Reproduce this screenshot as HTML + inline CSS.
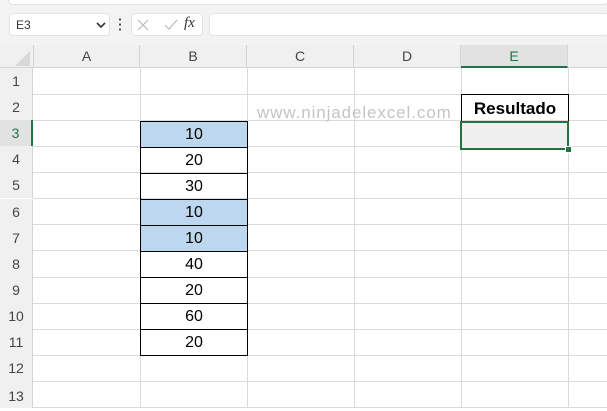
<html><head><style>
body{margin:0;width:607px;height:408px;overflow:hidden;background:#fff;font-family:"Liberation Sans",sans-serif;position:relative}
.top{position:absolute;left:0;top:0;width:607px;height:45px;background:#f3f3f3}
.strip{position:absolute;left:8px;top:0;width:599px;height:4px;background:#fff;border-radius:0 0 6px 6px;border:1px solid #e0e0e0;border-top:none}
.box{position:absolute;top:13px;height:23px;background:#fff;border-radius:4px;border:1px solid #e3e3e3;box-sizing:border-box}
.hdr{position:absolute;top:45px;height:23px;background:#f0f0f0;border-bottom:1px solid #d4d4d4;box-sizing:border-box}
.ch{position:absolute;top:45px;height:23px;line-height:23px;text-align:center;font-size:14px;color:#444;border-right:1px solid #d4d4d4;box-sizing:border-box}
.rh{position:absolute;left:0;width:33px;text-align:center;font-size:14px;color:#444;background:#f0f0f0;border-right:1px solid #d4d4d4;box-sizing:border-box}
.vl{position:absolute;top:68px;width:1px;height:340px;background:#dadada}
.hl{position:absolute;left:33px;width:574px;height:1px;background:#dadada}
.c{position:absolute;left:140px;width:108px;height:27px;border:1px solid #000;box-sizing:border-box;text-align:center;font-size:16px;line-height:25px;color:#000}
</style></head><body>
<div class="top"></div><div class="strip"></div>
<div class="box" style="left:9px;width:101px"><span style="position:absolute;left:6px;top:4px;font-size:12px;color:#333">E3</span><svg style="position:absolute;left:86px;top:8px" width="10" height="7"><path d="M1 1L5 5L9 1" stroke="#333" stroke-width="1.6" fill="none"/></svg></div>
<div style="position:absolute;left:119px;top:17px;width:2px;height:14px;background:radial-gradient(circle,#444 1px,transparent 1.2px) 0 0/2px 5px"></div>
<div class="box" style="left:131px;width:72px"><svg style="position:absolute;left:5px;top:5px" width="50" height="12"><path d="M1 1L11 11M11 1L1 11" stroke="#bbb" stroke-width="1.2"/><path d="M28 6L32 10L40 1" stroke="#bbb" stroke-width="1.2" fill="none"/></svg><span style="position:absolute;left:52px;top:1px;font-family:'Liberation Serif',serif;font-style:italic;font-size:15px;color:#333">fx</span></div>
<div class="box" style="left:209px;width:400px"></div>
<div class="hdr" style="left:0;width:607px"></div>
<svg style="position:absolute;left:14px;top:51px" width="18" height="16"><path d="M16 0L16 15L1 15Z" fill="#d8d8d8"/></svg>
<div class="ch" style="left:33px;width:107px;border-left:1px solid #d4d4d4">A</div>
<div class="ch" style="left:140px;width:107px">B</div>
<div class="ch" style="left:247px;width:107px">C</div>
<div class="ch" style="left:354px;width:107px">D</div>
<div class="ch" style="left:461px;width:107px;background:#e2e2e2;color:#217346;border-bottom:2px solid #217346">E</div>
<div class="vl" style="left:140px"></div><div class="vl" style="left:247px"></div><div class="vl" style="left:354px"></div><div class="vl" style="left:461px"></div><div class="vl" style="left:568px"></div>
<div class="rh" style="top:68px;height:26.1px;line-height:26px">1</div>
<div class="rh" style="top:94.1px;height:26.1px;line-height:26px">2</div>
<div class="rh" style="top:120.2px;height:26.1px;line-height:26px;background:#e2e2e2;color:#217346;border-right:2px solid #217346">3</div>
<div class="rh" style="top:146.3px;height:26.1px;line-height:26px">4</div>
<div class="rh" style="top:172.4px;height:26.1px;line-height:26px">5</div>
<div class="rh" style="top:198.5px;height:26.1px;line-height:26px">6</div>
<div class="rh" style="top:224.6px;height:26.1px;line-height:26px">7</div>
<div class="rh" style="top:250.7px;height:26.1px;line-height:26px">8</div>
<div class="rh" style="top:276.8px;height:26.1px;line-height:26px">9</div>
<div class="rh" style="top:302.9px;height:26.1px;line-height:26px">10</div>
<div class="rh" style="top:329px;height:26.1px;line-height:26px">11</div>
<div class="rh" style="top:355.1px;height:26.1px;line-height:26px">12</div>
<div class="rh" style="top:381.2px;height:27px;line-height:30px">13</div>
<div class="hl" style="top:94px"></div><div class="hl" style="top:120px"></div><div class="hl" style="top:146px"></div><div class="hl" style="top:172px"></div><div class="hl" style="top:198px"></div><div class="hl" style="top:224px"></div><div class="hl" style="top:250px"></div><div class="hl" style="top:277px"></div><div class="hl" style="top:303px"></div><div class="hl" style="top:329px"></div><div class="hl" style="top:355px"></div><div class="hl" style="top:381px"></div><div class="hl" style="top:407px"></div>
<div style="position:absolute;left:257px;top:103px;font-size:17px;color:#c4c4c4;letter-spacing:0.9px">www.ninjadelexcel.com</div>
<div class="c" style="top:121px;background:#bdd7ee">10</div>
<div class="c" style="top:147px">20</div>
<div class="c" style="top:173px">30</div>
<div class="c" style="top:199px;background:#bdd7ee">10</div>
<div class="c" style="top:225px;background:#bdd7ee">10</div>
<div class="c" style="top:251px">40</div>
<div class="c" style="top:277px">20</div>
<div class="c" style="top:303px">60</div>
<div class="c" style="top:329px">20</div>
<div style="position:absolute;left:461px;top:94px;width:108px;height:28px;border:1px solid #000;box-sizing:border-box;text-align:center;font-weight:bold;font-size:17px;line-height:28px">Resultado</div>
<div style="position:absolute;left:460px;top:121px;width:109px;height:29px;border:2px solid #217346;box-sizing:border-box;background:#efefef"></div>
<div style="position:absolute;left:565px;top:146px;width:5px;height:5px;background:#217346;border:1px solid #fff"></div>
</body></html>
